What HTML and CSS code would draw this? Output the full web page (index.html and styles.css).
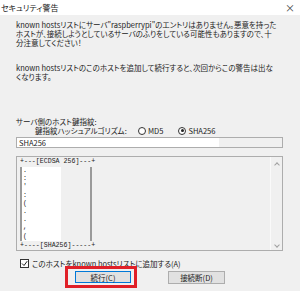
FILE: index.html
```html
<!DOCTYPE html>
<html lang="ja">
<head>
    <meta charset="UTF-8">
    <title>セキュリティ警告</title>
    <link rel="stylesheet" href="styles.css">
</head>
<body>

<div class="dialog">
    <div class="titlebar">
        <span class="title">セキュリティ警告</span>
        <span class="close">×</span>
    </div>

    <div class="content">
        <p class="msg">
            <span class="line">known hostsリストにサーバ"raspberrypi"のエントリはありません。悪意を持った</span>
            <span class="line">ホストが、接続しようとしているサーバのふりをしている可能性もありますので、十</span>
            <span class="line">分注意してください！</span>
        </p>
        <p class="msg msg2">
            <span class="line">known hostsリストのこのホストを追加して続行すると、次回からこの警告は出な</span>
            <span class="line">くなります。</span>
        </p>

        <div class="fp-label">サーバ側のホスト鍵指紋:</div>
        <div class="algo-row">
            <span class="algo-label">鍵指紋ハッシュアルゴリズム:</span>
            <label class="radio"><span class="dot"></span>MD5</label>
            <label class="radio"><span class="dot checked"></span>SHA256</label>
        </div>

        <div class="fp-field">
            <span class="fp-text">SHA256</span>
            <span class="fp-hidden"></span>
        </div>

        <div class="art-box">
            <div class="art">
                <div class="art-edge">+---[ECDSA 256]---+</div>
                <div class="art-body">
                    <div class="art-white">
                        <span>.</span><span>:</span><span>'</span><span>:</span><span>(</span><span>.</span><span>.</span><span>,</span><span>(</span>
                    </div>
                </div>
                <div class="art-edge">+----[SHA256]-----+</div>
            </div>
            <div class="scrollbar">
                <span class="arrow up"></span>
                <span class="arrow down"></span>
            </div>
        </div>

        <label class="check-row">
            <span class="checkbox">
                <svg width="7" height="7" viewBox="0 0 7 7"><path d="M1 3.5 L3 5.5 L6.2 1.2" fill="none" stroke="#222" stroke-width="1"/></svg>
            </span>
            このホストをknown hostsリストに追加する(A)
        </label>

        <div class="buttons">
            <div class="highlight">
                <button class="btn primary">続行(C)</button>
            </div>
            <button class="btn">接続断(D)</button>
        </div>
    </div>
</div>

</body>
</html>
```

FILE: styles.css
```css
body {
    margin: 0;
    background-color: #f0f0f0;
    font-family: "Noto Sans CJK JP", "Noto Sans", sans-serif;
    font-feature-settings: "palt";
    color: #222;
}
.dialog {
    width: 300px;
    height: 291px;
    overflow: hidden;
}
.titlebar {
    height: 15px;
    background-color: #fff;
    display: flex;
    justify-content: space-between;
    align-items: center;
    padding: 0 5px 0 1px;
    font-size: 8px;
}
.close {
    font-size: 10px;
    color: #444;
}
.content {
    padding: 5px 17px 0 16px;
    font-size: 7.5px;
}
.msg {
    margin: 0;
}
.msg2 {
    margin-top: 16px;
}
.line {
    display: block;
    height: 9px;
    line-height: 9px;
    white-space: nowrap;
}
.fp-label {
    margin-top: 36px;
    line-height: 9px;
}
.algo-row {
    display: flex;
    align-items: center;
    height: 9px;
    padding-left: 19px;
    white-space: nowrap;
}
.algo-label {
    width: 103px;
}
.radio {
    display: flex;
    align-items: center;
    gap: 2px;
    margin-right: 15px;
}
.dot {
    width: 6px;
    height: 6px;
    border: 1px solid #333;
    border-radius: 50%;
    background: #fff;
    display: flex;
    align-items: center;
    justify-content: center;
}
.dot.checked::after {
    content: "";
    width: 3px;
    height: 3px;
    border-radius: 50%;
    background: #222;
}
.fp-field {
    margin-top: 2px;
    height: 9px;
    border: 1px solid #adadad;
    display: flex;
    align-items: center;
    background: #f0f0f0;
    overflow: hidden;
}
.fp-text {
    background: #fff;
    padding-left: 2px;
    line-height: 9px;
}
.fp-hidden {
    width: 173px;
    height: 9px;
    background: #fff;
}
.art-box {
    margin-top: 8px;
    height: 93px;
    border: 1px solid #adadad;
    display: flex;
    justify-content: space-between;
}
.art {
    padding: 1px 0 0 3px;
    font-family: "Liberation Mono", monospace;
    font-size: 6.6px;
}
.art-edge {
    line-height: 8px;
    height: 8px;
    white-space: pre;
}
.art-body {
    width: 68px;
    height: 74px;
    margin: 1px 0;
    border-left: 2px solid #9a9a9a;
    border-right: 2px solid #9a9a9a;
}
.art-white {
    width: 38px;
    height: 74px;
    background: #fff;
    display: flex;
    flex-direction: column;
    padding-left: 1px;
}
.art-white span {
    line-height: 8.2px;
    height: 8.2px;
}
.scrollbar {
    width: 11px;
    border-left: 1px solid #fafafa;
    display: flex;
    flex-direction: column;
    justify-content: space-between;
    align-items: center;
    padding: 6px 0 3px;
}
.arrow {
    width: 3px;
    height: 3px;
    border-left: 1px solid #a0a0a0;
    border-top: 1px solid #a0a0a0;
}
.arrow.up {
    transform: rotate(45deg);
}
.arrow.down {
    transform: rotate(225deg);
}
.check-row {
    display: flex;
    align-items: center;
    gap: 3px;
    margin-top: 8px;
    padding-left: 4px;
    height: 9px;
    white-space: nowrap;
}
.checkbox {
    width: 7px;
    height: 7px;
    border: 1px solid #333;
    background: #fff;
    display: flex;
}
.buttons {
    display: flex;
    align-items: center;
    margin-top: -2px;
    padding-left: 49px;
    gap: 31px;
}
.highlight {
    border: 3px solid #e02028;
    padding: 2px 3px 2px 7px;
}
.btn {
    width: 57px;
    height: 13px;
    padding: 0;
    font-family: inherit;
    font-feature-settings: "palt";
    font-size: 7.5px;
    color: #222;
    background: #e1e1e1;
    border: 1px solid #adadad;
}
.btn.primary {
    width: 56px;
    height: 12px;
    border-color: #0078d7;
}
```
